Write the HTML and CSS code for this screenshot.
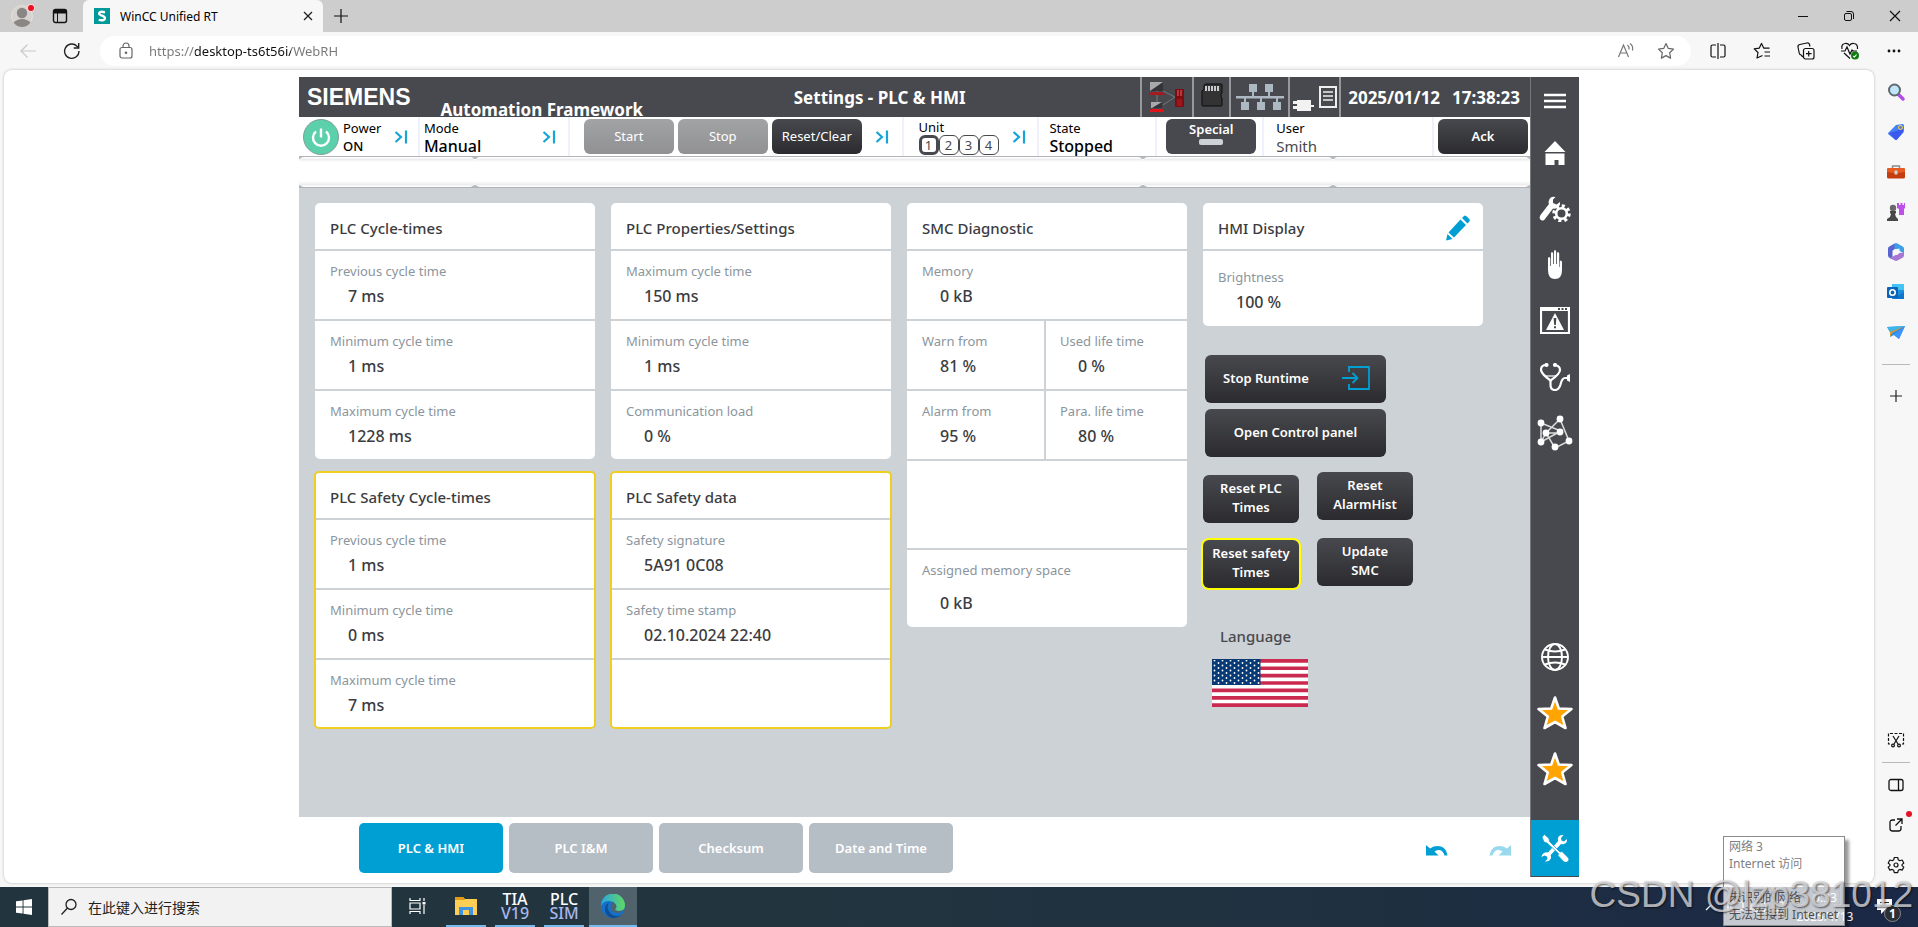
FILE: index.html
```
<!DOCTYPE html>
<html lang="zh-CN">

<head>
    <title>WinCC Unified RT</title>
    <meta charset="utf-8">
    <meta name="viewport" content="width=device-width, initial-scale=1.0">
    <link rel="stylesheet" href="styles.css">
</head>

<body>

    <div class="tabbar">
        <button class="profile" aria-label="Profile">
            <svg width="24" height="24" viewBox="0 0 24 24"><circle cx="11" cy="12" r="10.500" fill="#d6d3d0" stroke="#e4dfda"/><circle cx="11" cy="9" r="5.200" fill="#8a8683"/><path d="M2.500 18.500Q6 15 11 15T19.500 18.500Q16 23 11 23T2.500 18.500" fill="#8a8683"/><circle cx="20" cy="4" r="3.600" fill="#e81123" stroke="#fff" stroke-width=".8"/></svg>
        </button>
        <button class="workspaces" aria-label="Workspaces">
            <svg width="16" height="16" viewBox="0 0 16 16"><rect x="1.500" y="1.500" width="13" height="13" rx="2" fill="none" stroke="#111" stroke-width="1.400"/><path d="M1 2h14v3.500H1z" fill="#111"/><path d="M5.500 5v9" stroke="#111"/></svg>
        </button>
        <div class="tab">
            <svg width="16" height="16" viewBox="0 0 16 16"><path fill="#00999a" d="M0 0h16v16H0z"/><path d="M11 4.300Q5.200 2.900 5.200 5.500C5.200 7.900 10.900 7.500 10.900 10.200Q10.900 13.200 4.700 11.800" fill="none" stroke="#fff" stroke-width="2.400"/></svg>
            <span>WinCC Unified RT</span>
            <button aria-label="Close tab"><svg width="10" height="10" viewBox="0 0 10 10"><path d="M1 1l8 8M9 1l-8 8" stroke="#222" stroke-width="1.300"/></svg></button>
        </div>
        <button class="newtab" aria-label="New tab"><svg width="14" height="14" viewBox="0 0 14 14"><path d="M7 0v14M0 7h14" stroke="#111" stroke-width="1.200"/></svg></button>
        <div class="winbtns">
            <button aria-label="Minimize"><svg width="12" height="12" viewBox="0 0 12 12"><path d="M1 6.500h10" stroke="#111"/></svg></button>
            <button aria-label="Restore"><svg width="12" height="12" viewBox="0 0 12 12" fill="none" stroke="#111"><rect x="1.500" y="3.500" width="7" height="7" rx="1.500"/><path d="M3.500 1.500H8Q10.500 1.500 10.500 4v5"/></svg></button>
            <button aria-label="Close"><svg width="12" height="12" viewBox="0 0 12 12"><path d="M1 1l10 10M11 1L1 11" stroke="#111" stroke-width="1.200"/></svg></button>
        </div>
    </div>

    <div class="toolbar">
        <button class="back" aria-label="Back"><svg width="18" height="16" viewBox="0 0 18 16" fill="none" stroke="#c8c8c8" stroke-width="1.200"><path d="M17 8H2M8.500 1.500L2 8l6.500 6.500"/></svg></button>
        <button class="reload" aria-label="Refresh"><svg width="18" height="18" viewBox="0 0 18 18" fill="none" stroke="#222" stroke-width="1.400"><path d="M16 9A7.200 7.200 0 1 1 14 4.200L15.500 5.500"/><path d="M15.700 1v5h-5"/></svg></button>
        <div class="address">
            <svg width="14" height="17" viewBox="0 0 14 17" fill="none" stroke="#666" stroke-width="1.200"><rect x="1" y="5.500" width="12" height="10.500" rx="2"/><path d="M4 5.500V4a3 3 0 0 1 6 0v1.500"/><circle cx="7" cy="10.700" r=".7" fill="#666"/></svg>
            <input class="url" type="text" aria-label="Address" value="https://desktop-ts6t56i/WebRH">
            <button aria-label="Read aloud"><svg width="18" height="18" viewBox="0 0 18 18" fill="none" stroke="#777" stroke-width="1.200"><path d="M1.500 15L6.500 3l5 12M3.200 11h6.600M10.500 3q2 1.700 1.500 4.500M13 1.500Q16.500 4 15.500 8.500"/></svg></button>
            <button aria-label="Add to favorites"><svg width="18" height="18" viewBox="0 0 18 18" fill="none" stroke="#666" stroke-width="1.200" stroke-linejoin="round"><path d="M9 1.500l2.300 4.900 5.200.7-3.800 3.700.9 5.300L9 13.600l-4.600 2.500.9-5.300L1.500 7.100l5.200-.7z"/></svg></button>
        </div>
        <div class="tools">
            <button aria-label="Split screen"><svg width="18" height="18" viewBox="0 0 18 18" fill="none" stroke="#111" stroke-width="1.200"><path d="M9 1v16M7 3H3.500Q2 3 2 4.500v9Q2 15 3.500 15H7M11 3h3.500Q16 3 16 4.500v9q0 1.500-1.500 1.500H11"/></svg></button>
            <button aria-label="Favorites"><svg width="18" height="18" viewBox="0 0 18 18" fill="none" stroke="#111" stroke-width="1.200" stroke-linejoin="round"><path d="M9.500 13.500L4 16l1-5.500-3.800-3.600 5-.7L8.500 1.500l2.300 4.700h5.700M11.500 10H17M11.500 14H17"/></svg></button>
            <button aria-label="Collections"><svg width="18" height="18" viewBox="0 0 18 18" fill="none" stroke="#111" stroke-width="1.200"><rect x="6.500" y="6.500" width="10.500" height="10.500" rx="2"/><path d="M11.700 9v5.500M9 11.700h5.500M4.500 13Q2.500 13 2.200 11L1 5Q.7 3 2.700 2.500L10 1q2-.3 2.500 1.500l.5 2M6 15l-2-2"/></svg></button>
            <button aria-label="Browser essentials"><svg width="20" height="18" viewBox="0 0 20 18" fill="none" stroke="#111" stroke-width="1.200"><path d="M2 7Q1 2 5 1.500 8 1 9.500 3.500 11 1 14 1.500 18 2 17.500 7M1 9h4l2-4 3 7 2-4 1 1h4M4 11l6 5.500"/><circle cx="15" cy="13.500" r="4" fill="#107c10" stroke="none"/><path d="M13.300 14l1.200 1 2-2.500" stroke="#fff"/></svg></button>
            <button aria-label="Settings and more"><svg width="16" height="4" viewBox="0 0 16 4" fill="#111"><circle cx="3" cy="2" r="1.400"/><circle cx="8" cy="2" r="1.400"/><circle cx="13" cy="2" r="1.400"/></svg></button>
        </div>
    </div>

    <div class="browser">
        <main class="page">
            <div class="hmi">
                <div class="screen">

                    <header class="titlebar">
                        <div class="brand">SIEMENS</div>
                        <div class="product">Automation Framework</div>
                        <h1>Settings - PLC &amp; HMI</h1>
                        <div class="cell c1">
                            <svg width="36" height="32" viewBox="0 0 36 32"><path d="M8 9v16M14 10l12 6-12 8" fill="none" stroke="#77777a"/><path d="M1 1h13v9H1z" fill="#a9a9ab"/><path d="M1 10L14 1v9z" fill="#343438"/><path d="M0 14l2-3h12l2 3z" fill="#a81a1f"/><path d="M2 21h11v6H2z" fill="#a9a9ab"/><path d="M3 27l10-6v6z" fill="#343438"/><path d="M1 31v-2l2-1h10l2 1v2z" fill="#e0141a"/><rect x="26" y="8" width="9" height="18" rx="1" fill="#7d0d10"/><path d="M28 9h2v6h-2zM31 9h2v6h-2z" fill="#b53a3d"/><path d="M28 18h5v7h-5z" fill="#a01519"/></svg>
                        </div>
                        <div class="cell c2">
                            <svg width="22" height="24" viewBox="0 0 22 24"><path d="M5 1h15q1 0 1 1v8l-1 1v3l1 1v7q0 1-1 1H2q-1 0-1-1V8l2-2V3q0-2 2-2z" fill="#333" stroke="#0c0c0c"/><path d="M5 3v5M8 3v5M11 3v5M14 3v5M17 3v5" stroke="#e3e3ea" stroke-width="1.700"/></svg>
                        </div>
                        <div class="cell c3">
                            <svg width="48" height="26" viewBox="0 0 48 26" fill="#adb9c2"><path d="M0 12h48v2.500H0zM13 0h8v8h-8zM29 0h8v8h-8zM5 18h8v8H5zM21 18h8v8h-8zM37 18h8v8h-8zM16 8h2v5h-2zM32 8h2v5h-2zM8 13h2v5H8zM24 13h2v5h-2zM40 13h2v5h-2z"/></svg>
                        </div>
                        <div class="cell c4">
                            <svg width="46" height="28" viewBox="0 0 46 28"><path d="M1 18h6v3H1zM1 23h6v3H1zM5 17h14v11H5zM18 22h4v2h-4z" fill="#f2f2f2"/><rect x="28" y="4" width="16" height="20" fill="none" stroke="#eee" stroke-width="2"/><path d="M31 9h10M31 13h10M31 17h10" stroke="#eee" stroke-width="1.500"/></svg>
                        </div>
                        <div class="clock"><span>2025/01/12</span><span>17:38:23</span></div>
                    </header>

                    <section class="status">
                        <div class="state power">
                            <svg width="36" height="36" viewBox="0 0 36 36" fill="none"><circle cx="18" cy="18" r="17.500" fill="#5bd0ab" stroke="#7e9f93"/><path d="M13 12.500a8 8 0 1 0 10 0M18 9.500v9" stroke="#fff" stroke-width="2.400"/></svg>
                            <p>Power<b>ON</b></p>
                            <button class="step" aria-label="Open power"><svg width="14" height="16" viewBox="0 0 14 16" fill="none" stroke="#16a5d5" stroke-width="2.200"><path d="M1.500 3L7 8l-5.500 5M12 1.500v13"/></svg></button>
                        </div>
                        <div class="state mode">
                            <p>Mode<b class="big">Manual</b></p>
                            <button class="step" aria-label="Open mode"><svg width="14" height="16" viewBox="0 0 14 16" fill="none" stroke="#16a5d5" stroke-width="2.200"><path d="M1.500 3L7 8l-5.500 5M12 1.500v13"/></svg></button>
                        </div>
                        <div class="state commands">
                            <button class="btn off">Start</button>
                            <button class="btn off">Stop</button>
                            <button class="btn">Reset/Clear</button>
                            <button class="step" aria-label="More commands"><svg width="14" height="16" viewBox="0 0 14 16" fill="none" stroke="#16a5d5" stroke-width="2.200"><path d="M1.500 3L7 8l-5.500 5M12 1.500v13"/></svg></button>
                        </div>
                        <div class="state unit">
                            <div>
                                <p>Unit</p>
                                <div class="units">
                                    <button class="active">1</button><button>2</button><button>3</button><button>4</button>
                                </div>
                            </div>
                            <button class="step" aria-label="Open unit"><svg width="14" height="16" viewBox="0 0 14 16" fill="none" stroke="#16a5d5" stroke-width="2.200"><path d="M1.500 3L7 8l-5.500 5M12 1.500v13"/></svg></button>
                        </div>
                        <div class="state machine"><p>State<b class="big">Stopped</b></p></div>
                        <div class="state special"><button class="btn flat">Special<i></i></button></div>
                        <div class="state user"><p>User<b class="name">Smith</b></p></div>
                        <div class="state ack"><button class="btn">Ack</button></div>
                    </section>

                    <div class="messages"><div></div><div></div><div></div><div></div></div>

                    <section class="content">
                        <div class="col">
                            <article class="card">
                                <h2>PLC Cycle-times</h2>
                                <dl>
                                    <div><dt>Previous cycle time</dt><dd>7 ms</dd></div>
                                    <div><dt>Minimum cycle time</dt><dd>1 ms</dd></div>
                                    <div><dt>Maximum cycle time</dt><dd>1228 ms</dd></div>
                                </dl>
                            </article>
                            <article class="card safety">
                                <h2>PLC Safety Cycle-times</h2>
                                <dl>
                                    <div><dt>Previous cycle time</dt><dd>1 ms</dd></div>
                                    <div><dt>Minimum cycle time</dt><dd>0 ms</dd></div>
                                    <div><dt>Maximum cycle time</dt><dd>7 ms</dd></div>
                                </dl>
                            </article>
                        </div>

                        <div class="col">
                            <article class="card">
                                <h2>PLC Properties/Settings</h2>
                                <dl>
                                    <div><dt>Maximum cycle time</dt><dd>150 ms</dd></div>
                                    <div><dt>Minimum cycle time</dt><dd>1 ms</dd></div>
                                    <div><dt>Communication load</dt><dd>0 %</dd></div>
                                </dl>
                            </article>
                            <article class="card safety">
                                <h2>PLC Safety data</h2>
                                <dl>
                                    <div><dt>Safety signature</dt><dd>5A91 0C08</dd></div>
                                    <div><dt>Safety time stamp</dt><dd>02.10.2024 22:40</dd></div>
                                    <div></div>
                                </dl>
                            </article>
                        </div>

                        <div class="col">
                            <article class="card">
                                <h2>SMC Diagnostic</h2>
                                <dl class="smc">
                                    <div class="wide"><dt>Memory</dt><dd>0 kB</dd></div>
                                    <div><dt>Warn from</dt><dd>81 %</dd></div>
                                    <div class="right"><dt>Used life time</dt><dd>0 %</dd></div>
                                    <div><dt>Alarm from</dt><dd>95 %</dd></div>
                                    <div class="right"><dt>Para. life time</dt><dd>80 %</dd></div>
                                    <div class="wide empty"></div>
                                    <div class="wide assigned"><dt>Assigned memory space</dt><dd>0 kB</dd></div>
                                </dl>
                            </article>
                        </div>

                        <div class="col">
                            <article class="card">
                                <h2>HMI Display
                                    <button class="edit" aria-label="Edit brightness"><svg width="26" height="26" viewBox="0 0 26 26" fill="#009fd3"><path d="M3.500 17.500L15.500 4.500l5.500 5.500L9 22.500zM17 3l2-2q1-1 2.200 0l3.200 3.200q1 1 0 2.200l-1.900 2zM2.500 19l5 5-6.500 1.500z"/></svg></button>
                                </h2>
                                <dl class="bright">
                                    <div><dt>Brightness</dt><dd>100 %</dd></div>
                                </dl>
                            </article>
                            <div class="system">
                                <button class="btn runtime">Stop Runtime
                                    <svg width="28" height="24" viewBox="0 0 28 24" fill="none" stroke="#009fd3" stroke-width="1.800"><path d="M7 6V1h20v22H7v-5M0 12h15M10.500 7l5 5-5 5"/></svg>
                                </button>
                                <button class="btn">Open Control panel</button>
                            </div>
                            <div class="resets">
                                <div>
                                    <button class="btn">Reset PLC<br>Times</button>
                                    <button class="btn marked">Reset safety<br>Times</button>
                                </div>
                                <div>
                                    <button class="btn">Reset<br>AlarmHist</button>
                                    <button class="btn">Update<br>SMC</button>
                                </div>
                            </div>
                            <div class="language">
                                <p id="lang">Language</p>
                                <button class="flag" aria-labelledby="lang">
                                    <svg width="96" height="48" viewBox="0 0 96 48">
                                        <defs><pattern id="stars" width="8" height="5" patternUnits="userSpaceOnUse"><circle cx="2.500" cy="1.500" r=".9" fill="#fff"/><circle cx="6.500" cy="4" r=".9" fill="#fff"/></pattern></defs>
                                        <path fill="#fff" d="M0 0h96v48H0z"/>
                                        <path d="M0 1.850h96M0 9.230h96M0 16.600h96M0 24h96M0 31.400h96M0 38.800h96M0 46.150h96" stroke="#cb2a50" stroke-width="3.690"/>
                                        <path fill="#073a75" d="M0 0h48.500v25.900H0z"/><path fill="url(#stars)" d="M1 1h47v24H1z"/>
                                    </svg>
                                </button>
                            </div>
                        </div>
                    </section>

                    <footer class="footer">
                        <button class="pagebtn current">PLC &amp; HMI</button>
                        <button class="pagebtn">PLC I&amp;M</button>
                        <button class="pagebtn">Checksum</button>
                        <button class="pagebtn">Date and Time</button>
                        <div class="history">
                            <button aria-label="Undo"><svg width="22" height="12" viewBox="0 0 22 12"><path d="M0 0l4 3.500Q9 0 15 1.500q5.500 2 6.500 9h-3q-1.500-5-5-5.500-3-.5-5 1.500l4 4H0z" fill="#009fd3"/></svg></button>
                            <button aria-label="Redo"><svg width="22" height="12" viewBox="0 0 22 12"><path d="M22 0l-4 3.500Q13 0 7 1.500q-5.500 2-6.500 9h3Q5 5.500 8.500 5q3-.5 5 1.500l-4 4H22z" fill="#99d9ed"/></svg></button>
                        </div>
                    </footer>
                </div>

                <nav class="mainnav">
                    <a class="menu" href="#" aria-label="Menu"><svg width="22" height="16" viewBox="0 0 22 16" stroke="#fff" stroke-width="2.400"><path d="M0 2h22M0 8h22M0 14h22"/></svg></a>
                    <a href="#" aria-label="Home"><svg width="22" height="24" viewBox="0 0 22 24" fill="#fff"><path d="M11 0l10.500 11H.5zM1.500 12.500h19V24h-6v-5h-4v5h-9z"/></svg></a>
                    <a href="#" aria-label="Configuration"><svg width="32" height="26" viewBox="0 0 32 26"><path d="M16.500 1Q11 0 9.800 5q-.5 2 .2 3L1.500 19Q-.5 22.500 2 24t4-1l8-10.500q2 .6 4-.5 3.500-1.500 3-6l-3.500 2.500-3.500-1.500v-3.500z" fill="#fff"/><circle cx="22.500" cy="17.500" r="7.500" fill="none" stroke="#fff" stroke-width="3.500" stroke-dasharray="3 2.890"/><circle cx="22.500" cy="17.500" r="5.300" fill="#48494e" stroke="#fff" stroke-width="2.600"/></svg></a>
                    <a href="#" aria-label="Manual"><svg width="16" height="30" viewBox="0 0 16 30" fill="#fff"><path d="M2 7q1.300 0 1.300 1.500V16h.7V3.500Q4 2 5 2t1.200 1.500V14H7V1.500Q7 0 8 0t1.200 1.500V14h.8V3.500Q10 2 11 2t1.200 1.500V17h.6v-5q0-1.500 1-1.500T15 12v8q0 9-7 9T1 20V8.500Q1 7 2 7z"/></svg></a>
                    <a href="#" aria-label="Alarms"><svg width="30" height="28" viewBox="0 0 30 28"><path d="M1 3v23h28V3" fill="none" stroke="#fff" stroke-width="2.200"/><path d="M0 0h30v4H0z" fill="#fff"/><path d="M18 1h2v2h-2zM21.500 1h2v2h-2zM25 1h2v2h-2z" fill="#48494e"/><path d="M15 6l9 17H6z" fill="#fff"/><path d="M13.600 11h2.800l-.6 7h-1.600zM14 19.300h2v2h-2z" fill="#48494e"/></svg></a>
                    <a href="#" aria-label="Diagnostics"><svg width="30" height="28" viewBox="0 0 30 28" fill="none" stroke="#fff" stroke-width="2.200"><path d="M6 2Q1 2 1 7q.5 4 9.500 10.500Q20 11 20 7t-5-5"/><path d="M5 13h11" stroke-width="1.200"/><path d="M10.500 17v5q0 5 4.500 5 4 0 5.500-5.500Q22 15 25 15h2"/><path d="M27 12.500l3-1.500v8l-3-1.500z" fill="#fff" stroke="none"/><circle cx="6.500" cy="2" r="1"/><circle cx="15" cy="2" r="1"/></svg></a>
                    <a href="#" aria-label="Network"><svg width="36" height="36" viewBox="0 0 36 36"><path d="M4 8v19l20-11L4 8M4 27L9 18 23 4l9 22-14 7L9 18h15" fill="none" stroke="#ddd" stroke-width="1.500"/><g fill="#fff"><circle cx="4" cy="8" r="3.400"/><circle cx="23" cy="4" r="3.400"/><circle cx="9" cy="18" r="3.400"/><circle cx="23" cy="17" r="3.400"/><circle cx="4" cy="27" r="3.400"/><circle cx="32" cy="26" r="3.400"/><circle cx="18" cy="32" r="3.400"/></g></svg></a>
                    <a class="lower" href="#" aria-label="Language"><svg width="30" height="30" viewBox="0 0 30 30" fill="none" stroke="#fff" stroke-width="1.900"><circle cx="15" cy="15" r="13"/><ellipse cx="15" cy="15" rx="7" ry="13"/><path d="M2 15h26M5 7.500q10 4 20 0M5 22.500q10-4 20 0"/></svg></a>
                    <a href="#" aria-label="Favorite 1"><svg width="36" height="36" viewBox="0 0 36 36"><path d="M18 2.500L21.800 13.500 34.500 14l-9.300 7.500L28.500 33 18 27 7.500 33l3.300-11.500L1.500 14l12.700-.5z" fill="#ffa400" stroke="#fff" stroke-width="2.600" stroke-linejoin="round"/></svg></a>
                    <a href="#" aria-label="Favorite 2"><svg width="36" height="36" viewBox="0 0 36 36"><path d="M18 2.500L21.800 13.500 34.500 14l-9.300 7.500L28.500 33 18 27 7.500 33l3.300-11.500L1.500 14l12.700-.5z" fill="#ffa400" stroke="#fff" stroke-width="2.600" stroke-linejoin="round"/></svg></a>
                    <a class="here" href="#" aria-label="Settings"><svg width="28" height="28" viewBox="0 0 28 28"><path d="M26 5l-3 2.500-2.500-1L20 4l2.500-3Q18 .5 17 4q-.4 1.500.2 3L7 18.500q-1.500-.7-3 0Q.8 19.500.5 23l3-1.500 2.500 1 .5 2.500L4 27.500Q8.500 28 10 24q.3-1.500-.3-3L20 10q1.500.6 3 0Q26.500 9 26 5z" fill="#fff"/><path d="M1 3l2.500-2.500 4.500 4 .5 3L19 18l2-.5 6.500 6.500q1 2-.5 3.500t-4 .5L17 21.500l.5-2L6 9 3 8z" fill="#fff" stroke="#009fd3" stroke-width=".7"/></svg></a>
                </nav>
            </div>
        </main>

        <aside class="sidebar">
            <button aria-label="Search"><svg width="18" height="18" viewBox="0 0 18 18"><path d="M11 11l5 5" stroke="#b04be8" stroke-width="3.400" stroke-linecap="round"/><circle cx="7.500" cy="7" r="5.500" fill="#bfe6fb" stroke="#626a70" stroke-width="2"/></svg></button>
            <button aria-label="Shopping"><svg width="18" height="18" viewBox="0 0 18 18"><path d="M9 2l6.500-1q1.500 0 1.500 1.500V8q0 1-1 2l-6 6.500q-1 1-2 0l-6.500-5q-1-1 0-2z" fill="#4383fa"/><path d="M2 10L16 6v3l-6 7.500q-1 1-2 0z" fill="#3d58ee"/><circle cx="13.500" cy="4.500" r="2" fill="#6b7cc0" stroke="#ffd735"/></svg></button>
            <button aria-label="Tools"><svg width="18" height="18" viewBox="0 0 18 18"><path d="M5.500 5V3h7v2" fill="none" stroke="#8b8b8b" stroke-width="1.500"/><rect y="5" width="18" height="10.500" rx="1.500" fill="#c53d0f"/><path d="M0 6.500Q0 5 1.500 5h15Q18 5 18 6.500V9q-9 2-18 0z" fill="#e65c22"/><rect x="7.500" y="7.500" width="3" height="4" rx=".5" fill="#cfd6da"/></svg></button>
            <button aria-label="Games"><svg width="18" height="18" viewBox="0 0 18 18"><path d="M10 0h2v2h1.500V0h2v2H17V0h1v5l-1 1v6h-5V6l-2-1z" fill="#bd50e9"/><circle cx="6" cy="5" r="3.200" fill="#696969"/><path d="M3 8h6v2l-1 1 1 3 2 2v2H0v-2l3-2 1-3-1-1z" fill="#484848"/></svg></button>
            <button aria-label="Microsoft 365"><svg width="18" height="18" viewBox="0 0 18 18"><path d="M7.500.5L2 3.800Q1 4.500 1 5.500v7q0 1.300 1 1.900l3.500 2V7.800L11 4.500z" fill="#5a64cf"/><path d="M7.500.5Q9-.3 10.500.5l5.500 3.300q1 .7 1 1.700v5l-4.500-2.700V5.500L7.500 6.600z" fill="#3f9fe6"/><path d="M17 9.500v3q0 1.300-1 1.900l-5.500 3.100q-1.500.8-3 0L3 15l9.500-5z" fill="#a678d3"/><circle cx="9" cy="9" r="3" fill="#f7f7f7"/></svg></button>
            <button aria-label="Outlook"><svg width="18" height="18" viewBox="0 0 18 18"><path d="M5 1h12v15H5z" fill="#1e8fe0"/><path d="M5 1h12v6H5z" fill="#42c5f5"/><path d="M6 16l11-7v7z" fill="#0f75cc"/><rect y="4" width="11" height="11" rx="1" fill="#0a64b8"/><circle cx="5.500" cy="9.500" r="2.700" fill="none" stroke="#fff" stroke-width="1.600"/></svg></button>
            <button aria-label="Drop"><svg width="18" height="18" viewBox="0 0 18 18"><path d="M0 4l18-1-6 13-5-4-4 2V9z" fill="#2f8eea"/><path d="M0 4l18-1L3 9z" fill="#3cb6e8"/><path d="M18 3L3 9v5l2-4z" fill="#e79a22"/><path d="M18 3L7 12l5 4z" fill="#3d94fb"/></svg></button>
            <hr>
            <button aria-label="Customize"><svg width="14" height="14" viewBox="0 0 14 14"><path d="M7 1v12M1 7h12" stroke="#222" stroke-width="1.200"/></svg></button>
            <button class="first" aria-label="Screenshot"><svg width="18" height="16" viewBox="0 0 18 16" fill="none" stroke="#111" stroke-width="1.200"><path d="M3 12H1.500V1.500h15V12H15" stroke-dasharray="3 1.500"/><path d="M6 4l5 8M12 4l-5 8"/><circle cx="6" cy="13.500" r="1.400"/><circle cx="12" cy="13.500" r="1.400"/></svg></button>
            <hr>
            <button aria-label="Hide sidebar"><svg width="16" height="14" viewBox="0 0 16 14" fill="none" stroke="#111" stroke-width="1.300"><rect x="1" y="1.500" width="14" height="11" rx="2"/><path d="M10.500 1.500v11"/></svg></button>
            <button class="open" aria-label="Open link"><svg width="14" height="14" viewBox="0 0 14 14" fill="none" stroke="#111" stroke-width="1.300"><path d="M6 2H3.500Q1 2 1 4.500v6Q1 13 3.500 13h6q2.500 0 2.500-2.500V8M8 1h5v5M13 1L6.500 7.500"/></svg></button>
            <button aria-label="Settings"><svg width="18" height="18" viewBox="0 0 18 18" fill="none" stroke="#111" stroke-width="1.200" stroke-linejoin="round"><path d="M7.300 1.500h3.400l.6 2.300 1.500.9 2.300-.7 1.700 3L15 8.600v1l1.800 1.500-1.700 3-2.300-.7-1.500.9-.6 2.300H7.300l-.6-2.300-1.500-.9-2.300.7-1.700-3L3 9.600v-1L1.200 7l1.700-3 2.300.7 1.500-.9z"/><circle cx="9" cy="9" r="2"/></svg></button>
        </aside>
    </div>

    <div class="taskbar">
        <button class="start" aria-label="Start"><svg width="16" height="16" viewBox="0 0 16 16" fill="#fff"><path d="M0 2.300L6.600 1.400V7.600H0zM7.500 1.300L16 0v7.600H7.500zM0 8.400h6.600v6.200L0 13.700zM7.500 8.400H16V16l-8.500-1.200z"/></svg></button>
        <label class="search">
            <svg width="18" height="18" viewBox="0 0 18 18" fill="none" stroke="#222" stroke-width="1.300"><circle cx="11" cy="6.500" r="5"/><path d="M7.500 10L1.500 16.500"/></svg>
            <input type="text" placeholder="在此键入进行搜索" aria-label="搜索">
        </label>
        <div class="apps">
            <button class="app" aria-label="Task view"><svg width="17" height="18" viewBox="0 0 17 18" fill="none" stroke="#fff" stroke-width="1.200"><path d="M1 1v2.500h10V1M1 17v-2.500h10V17M1 6h10v6H1zM15 1v3M15 8v9"/><path d="M13.500 5h3v2.500h-3z" fill="#fff" stroke="none"/></svg></button>
            <button class="app run" aria-label="File Explorer"><svg width="22" height="18" viewBox="0 0 22 18"><path d="M0 0h8l2 2h12v16H0z" fill="#ffcf55"/><path d="M0 0h8l2 3H0z" fill="#e39b12"/><path d="M4 18V10h14v8h-4v-5H8v5z" fill="#3e94df"/></svg></button>
            <button class="app run text"><span>TIA</span><span class="sub">V19</span></button>
            <button class="app run text"><span>PLC</span><span class="sub">SIM</span></button>
            <button class="app run on" aria-label="Microsoft Edge"><svg width="24" height="24" viewBox="0 0 24 24"><defs><linearGradient id="eg" x1="0" x2="1"><stop offset="0" stop-color="#2aa7e0"/><stop offset="1" stop-color="#61d861"/></linearGradient></defs><circle cx="12" cy="12" r="12" fill="#1572c8"/><path d="M0 12A12 12 0 0 1 24 11q0 6-6 6-4 0-4-2 2-1 1-4-2-4-7-4-6 0-8 5z" fill="url(#eg)"/><path d="M8 9q-3 4 0 8.500t8 4.500q3 0 5-2-4 4.500-10 4Q4 22 4 15q0-5 4-6z" fill="#0f4d95"/><path d="M14 15q2-1 1-4l-3-3q-2 1-2.500 4 0 6 6.500 7 4 .5 6.500-3-2 1-5 1-3.500-.5-3.500-2z" fill="#50626b"/></svg></button>
        </div>
        <div class="tray">
            <svg width="12" height="8" viewBox="0 0 12 8" fill="none" stroke="#fff" stroke-width="1.200"><path d="M1 7l5-5 5 5"/></svg>
            <svg width="60" height="16" viewBox="0 0 60 16" fill="none" stroke="#fff" stroke-width="1.200"><path d="M4 3h12v8H4zM1 1v13h5M7 14h7M24 6h3l4-4v12l-4-4h-3zM34 5q2 3 0 6M37 3q3 5 0 10M47 3h9v8h-9zM50 11v4"/></svg>
            <div class="time">0:33<br>2025/1/13</div>
            <div class="notice">
                <svg width="18" height="18" viewBox="0 0 18 18"><path d="M1 1h15v11H9l-4 4v-4H1z" fill="#fff"/><path d="M4 4.500h9M4 8h9" stroke="#1c2b46" stroke-width="1.200"/></svg>
                <span>1</span>
            </div>
        </div>
    </div>

    <div class="tooltip" role="tooltip">网络 3<br>Internet 访问<br><br><span>未识别的网络<br>无法连接到 Internet</span></div>
    <div class="watermark">CSDN @lzp381012</div>

</body>

</html>
```
FILE: styles.css
```
* {
    box-sizing: border-box;
}

body {
    margin: 0;
    min-height: 100vh;
    display: flex;
    flex-direction: column;
    background-color: #f7f7f7;
    font-family: "Noto Sans", "Noto Sans CJK SC", sans-serif;
    font-size: 13px;
    color: #000;
    position: relative;
}

p, h1, h2, dl, dd {
    margin: 0;
}

button {
    font-family: inherit;
    border: none;
    background: none;
    padding: 0;
    color: inherit;
}

button, a {
    display: flex;
    align-items: center;
    justify-content: center;
}

svg {
    display: block;
    flex: none;
}

/* browser */

.tabbar {
    height: 32px;
    background-color: #cdcdcd;
    display: flex;
    align-items: center;
}

.profile {
    margin-left: 11px;
}

.workspaces {
    margin-left: 17px;
}

.tab {
    align-self: stretch;
    width: 240px;
    margin-left: 15px;
    padding: 0 10px 0 11px;
    display: flex;
    align-items: center;
    gap: 10px;
    background-color: #f7f7f7;
    border-radius: 6px 6px 0 0;
    font-size: 12px;
}

.tab button {
    margin-left: auto;
}

.newtab {
    margin-left: 11px;
}

.winbtns {
    display: flex;
    margin-left: auto;
    align-self: stretch;
}

.winbtns button {
    width: 46px;
}

.toolbar {
    height: 38px;
    display: flex;
    align-items: center;
    padding: 0 2px 1px 0;
}

.back {
    margin-left: 19px;
}

.reload {
    margin-left: 26px;
}

.address {
    flex: 1;
    height: 30px;
    margin-left: 19px;
    padding: 0 16px 0 19px;
    display: flex;
    align-items: center;
    gap: 22px;
    background-color: #fff;
    border-radius: 15px;
}

/* host part of the address is darker */
.url {
    flex: 1;
    border: none;
    padding: 0;
    margin-left: -6px;
    font-family: inherit;
    font-size: 13px;
    color: transparent;
    background: linear-gradient(90deg, #777 46px, #111 46px, #111 142px, #777 142px);
    background-clip: text;
    -webkit-background-clip: text;
}

.tools {
    display: flex;
    margin-left: 5px;
}

.tools button {
    width: 44px;
}

.browser {
    flex: 1;
    display: flex;
}

.page {
    flex: 1;
    margin: 0 0 4px 4px;
    padding: 7px 0 6px;
    background-color: #fff;
    border-radius: 8px;
    box-shadow: 0 0 3px rgba(0, 0, 0, 0.25);
    display: flex;
    justify-content: center;
}

.sidebar {
    width: 44px;
    padding: 2px 0;
    display: flex;
    flex-direction: column;
    align-items: center;
}

.sidebar button {
    height: 40px;
    width: 40px;
    position: relative;
}

.sidebar hr {
    width: 28px;
    margin: 12px 0 11px;
    border: none;
    border-top: 1px solid #b9b9b9;
}

.sidebar .first {
    margin-top: auto;
}

.sidebar .first + hr {
    margin: 2px 0;
}

.open::after {
    content: "";
    position: absolute;
    top: 6px;
    right: 4px;
    width: 6px;
    height: 6px;
    border-radius: 50%;
    background-color: #e81123;
}

/* hmi */

.hmi {
    width: 100%;
    max-width: 1280px;
    display: flex;
}

.screen {
    flex: 1;
    display: flex;
    flex-direction: column;
}

.titlebar {
    height: 40px;
    background-color: #48494e;
    color: #fff;
    display: flex;
    align-items: center;
    font-weight: 700;
    font-size: 17px;
}

.brand {
    margin-left: 8px;
    font-family: "Liberation Sans", sans-serif;
    font-size: 23px;
}

.product {
    align-self: flex-end;
    margin-left: 30px;
    line-height: 15px;
}

.titlebar h1 {
    flex: 1;
    padding-right: 24px;
    text-align: center;
    font-size: 17px;
}

.cell {
    align-self: stretch;
    border-left: 2px solid #97989b;
    display: flex;
    align-items: center;
    justify-content: center;
}

.c1 {
    width: 52px;
}

.c2 {
    width: 37px;
    padding-bottom: 4px;
}

.c3 {
    width: 59px;
}

.c4 {
    width: 51px;
}

.clock {
    display: flex;
    align-self: stretch;
    align-items: center;
    gap: 12px;
    padding: 0 10px 0 7px;
    border-left: 2px solid #97989b;
}

.status {
    height: 39px;
    background-color: #fff;
    display: grid;
    grid-template-columns: 121fr 150fr 334fr 136fr 118fr 107fr 170fr 96fr;
}

.state {
    display: flex;
    align-items: center;
    border-right: 2px solid #f0f0fc;
    min-width: 0;
}

.state p {
    line-height: 18px;
}

.state b {
    display: block;
    font-size: 13px;
    font-weight: 500;
}

.state .big {
    font-size: 16px;
}

.state .name {
    font-size: 15px;
    font-weight: 400;
    color: #48494e;
}

.step {
    margin-left: auto;
}

.power {
    padding: 0 10px 0 4px;
    gap: 4px;
}

.mode {
    padding: 0 12px 0 4px;
}

.commands {
    padding: 0 13px 0 14px;
    gap: 4px;
}

.unit {
    padding: 0 11px 0 15px;
}

.unit p {
    line-height: 16px;
}

.units {
    display: flex;
}

.units button {
    width: 20px;
    height: 20px;
    border: 1px solid #48494e;
    border-radius: 6px;
    color: #48494e;
    font-size: 13px;
}

.units .active {
    border-width: 3px;
}

.machine {
    padding-left: 10px;
}

.special {
    padding-left: 9px;
}

.user {
    padding-left: 12px;
}

.ack {
    padding-left: 4px;
    border: none;
}

.ack .btn, .special .btn {
    font-weight: 600;
}

.btn {
    width: 90px;
    height: 35px;
    border-radius: 6px;
    background: linear-gradient(#48494e, #2b2b2f);
    color: #fff;
    font-size: 13px;
    line-height: 19px;
}

.off {
    background: linear-gradient(#a2a3a5, #919193);
}

.flat {
    background: #48494e;
    flex-direction: column;
}

.flat i {
    width: 24px;
    height: 6px;
    margin-bottom: 9px;
    border-radius: 2px;
    background-color: #cdd2d6;
}

.messages {
    height: 32px;
    display: grid;
    grid-template-columns: 176fr 669fr 190fr 197fr;
    background: linear-gradient(#b6babf 2px, #fff 2px, #fff 28px, #b6babf 28px);
    border: 1px solid #b0b4b9;
    border-width: 1px 0;
}

.messages div {
    background: linear-gradient(#fff 1px, #ebebeb 2px, #fff 5px, #fff 24px, #ebebeb 28px, #fff 29px);
    border-radius: 5px;
}

.content {
    flex: 1;
    display: grid;
    grid-template-columns: repeat(4, 1fr);
    gap: 16px;
    padding: 15px 47px 20px 16px;
    background-color: #cdd2d6;
}

.col {
    display: flex;
    flex-direction: column;
    gap: 12px;
}

.card {
    border-radius: 5px;
    background-color: #cdd2d6;
    overflow: hidden;
    color: #3b3c41;
}

.card h2 {
    padding: 15px 15px 11px;
    background-color: #fff;
    font-size: 15px;
    font-weight: 500;
    line-height: 20px;
    display: flex;
    justify-content: space-between;
}

.card dl {
    display: grid;
    gap: 2px;
    margin-top: 2px;
}

.card dl div {
    min-height: 67px;
    padding: 11px 15px 13px;
    background-color: #fff;
}

.card dt {
    font-size: 13px;
    line-height: 18px;
    color: #8b959d;
}

.card dd {
    margin-top: 6px;
    padding-left: 18px;
    font-size: 16px;
    font-weight: 500;
    line-height: 20px;
}

.safety {
    margin: 0 -1px;
    border: 2px solid #efce1e;
}

.safety h2 {
    padding: 14px 14px 11px;
}

.safety dl div {
    padding-left: 14px;
}

.safety dl div:last-child {
    padding-bottom: 12px;
}

.card .smc {
    grid-template-columns: 137fr 141fr;
}

.smc .wide {
    grid-column: span 2;
}

.smc .right {
    padding-left: 14px;
}

.card .empty {
    min-height: 87px;
}

.card .assigned {
    padding-bottom: 14px;
}

.assigned dd {
    margin-top: 14px;
}

.card .bright div {
    padding: 17px 15px 14px;
}

.edit {
    height: 20px;
    margin-right: -3px;
}

.system {
    display: flex;
    flex-direction: column;
    gap: 6px;
    margin: 17px 0 0 2px;
}

.system .btn {
    width: 181px;
}

.col .btn {
    height: 48px;
    padding-bottom: 2px;
    font-weight: 600;
}

.system .runtime {
    justify-content: space-between;
    padding: 0 16px 2px 18px;
}

.resets {
    display: flex;
    gap: 18px;
    margin-top: 3px;
}

.resets div {
    display: flex;
    flex-direction: column;
    gap: 18px;
}

.resets div:first-child {
    gap: 17px;
    margin-top: 3px;
}

.resets .btn {
    width: 96px;
}

.marked {
    box-shadow: 0 0 0 2px #ffff00;
}

.language {
    margin: 26px 0 0 9px;
}

.language p {
    padding-left: 8px;
    margin-bottom: 13px;
    font-size: 15px;
    font-weight: 500;
    line-height: 20px;
    color: #48494e;
}

.footer {
    height: 60px;
    padding: 2px 19px 0 60px;
    display: flex;
    align-items: center;
    gap: 6px;
}

.pagebtn {
    width: 144px;
    height: 50px;
    border-radius: 5px;
    background-color: #b5bdc5;
    color: #fff;
    font-size: 13px;
    font-weight: 600;
}

.current {
    background-color: #009fd3;
}

.history {
    display: flex;
    gap: 41px;
    margin: 5px 0 0 auto;
}

.mainnav {
    width: 49px;
    padding-bottom: 1px;
    background-color: #48494e;
    border-left: 1px solid #77787c;
    display: flex;
    flex-direction: column;
}

.mainnav a {
    height: 56px;
}

.mainnav .menu {
    height: 48px;
}

.mainnav .lower {
    margin-top: auto;
}

.mainnav .here {
    margin-top: 23px;
    background-color: #009fd3;
}

/* taskbar */

.taskbar {
    height: 40px;
    display: flex;
    background: linear-gradient(90deg, #22353f 40%, #1f3040 70%, #1b2846);
    color: #fff;
}

.start {
    width: 48px;
}

.search {
    width: 344px;
    padding: 0 12px 0 11px;
    display: flex;
    align-items: center;
    gap: 10px;
    background-color: #f2f2f2;
    border: 1px solid #bbb;
}

.search input {
    flex: 1;
    border: none;
    padding: 0;
    background: none;
    font-family: "Noto Sans CJK SC", sans-serif;
    font-size: 14px;
}

.search input::placeholder {
    color: #222;
}

.apps {
    display: flex;
    gap: 9px;
    padding-left: 5px;
}

.app {
    width: 40px;
    border-bottom: 2px solid transparent;
}

.run {
    border-color: #76b9ed;
}

.text {
    flex-direction: column;
    font-size: 16px;
    font-weight: 500;
    line-height: 14px;
}

.sub {
    color: #a9b7ec;
}

.on {
    width: 48px;
    margin-left: -4px;
    background-color: #50626b;
}

.tray {
    margin-left: auto;
    display: flex;
    align-items: center;
    gap: 10px;
}

.time {
    width: 68px;
    margin-left: -6px;
    font-size: 12px;
    line-height: 19px;
    text-align: center;
}

.notice {
    position: relative;
    width: 49px;
    padding-left: 7px;
}

.notice span {
    position: absolute;
    top: 7px;
    left: 15px;
    width: 17px;
    height: 17px;
    border-radius: 50%;
    background-color: #2b2f36;
    border: 1px solid #888;
    font-size: 12px;
    font-weight: 700;
    line-height: 15px;
    text-align: center;
}

.tooltip {
    position: absolute;
    right: 73px;
    bottom: 1px;
    width: 122px;
    height: 90px;
    padding: 1px 5px;
    border: 1px solid #8a8a8a;
    background-color: rgba(255, 255, 255, 0.75);
    box-shadow: 4px 4px 3px rgba(0, 0, 0, 0.4);
    font-size: 12px;
    line-height: 17px;
    white-space: nowrap;
    color: #808080;
}

.tooltip span {
    color: #505050;
}

.watermark {
    position: absolute;
    right: 5px;
    bottom: 12px;
    font-family: "Liberation Sans", sans-serif;
    font-size: 37px;
    line-height: 40px;
    color: rgba(225, 225, 228, 0.75);
    text-shadow: 1px 1px 2px rgba(0, 0, 0, 0.6);
}
```
